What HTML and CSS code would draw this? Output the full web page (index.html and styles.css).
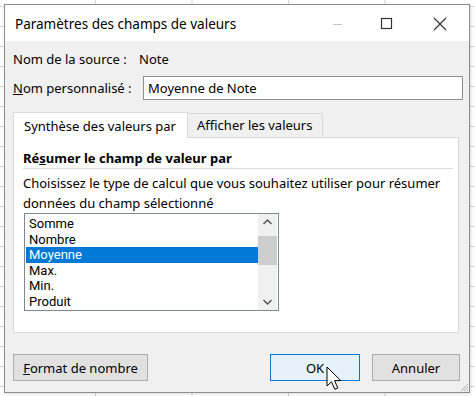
FILE: index.html
```html
<!DOCTYPE html>
<html lang="fr">
<head>
<meta charset="utf-8">
<title>Paramètres des champs de valeurs</title>
<link rel="stylesheet" href="styles.css">
</head>
<body>
<div class="screen">
  <div class="dialog">
    <div class="titlebar">
      <span class="title">Paramètres des champs de valeurs</span>
      <div class="controls">
        <svg class="ctl" width="46" height="30" viewBox="0 0 46 30"><path d="M18 15.5h9" stroke="#c4c4c4" stroke-width="1"/></svg>
        <svg class="ctl" width="46" height="30" viewBox="0 0 46 30"><rect x="17.5" y="9.5" width="10" height="10" fill="none" stroke="#333" stroke-width="1.2"/></svg>
        <svg class="ctl" width="46" height="30" viewBox="0 0 46 30"><path d="M17 9l12 12M29 9L17 21" stroke="#333" stroke-width="1.2"/></svg>
      </div>
    </div>
    <div class="body">
      <div class="row">
        <span class="label">Nom de la source :</span>
        <span class="value">Note</span>
      </div>
      <div class="row custom">
        <span class="label"><u>N</u>om personnalisé :</span>
        <div class="input">Moyenne de Note</div>
      </div>
      <div class="tabs">
        <div class="tab active">Synthèse des valeurs par</div>
        <div class="tab">Afficher les valeurs</div>
      </div>
      <div class="panel">
        <div class="group-title">Ré<u>s</u>umer le champ de valeur par</div>
        <div class="sep"></div>
        <p class="desc">Choisissez le type de calcul que vous souhaitez utiliser pour résumer données du champ sélectionné</p>
        <div class="listbox">
          <ul class="items">
            <li>Somme</li>
            <li>Nombre</li>
            <li class="selected">Moyenne</li>
            <li>Max.</li>
            <li>Min.</li>
            <li>Produit</li>
          </ul>
          <div class="scrollbar">
            <svg class="arrow" width="19" height="16" viewBox="0 0 19 16"><path d="M5.5 10l4-4 4 4" fill="none" stroke="#555" stroke-width="1.5"/></svg>
            <div class="track"><div class="thumb"></div></div>
            <svg class="arrow" width="19" height="16" viewBox="0 0 19 16"><path d="M5.5 6l4 4 4-4" fill="none" stroke="#555" stroke-width="1.5"/></svg>
          </div>
        </div>
      </div>
      <div class="buttons">
        <div class="btn format"><u>F</u>ormat de nombre</div>
        <div class="spacer"></div>
        <div class="btn ok">OK</div>
        <div class="btn cancel">Annuler</div>
      </div>
    </div>
    <svg class="grip" width="10" height="10" viewBox="0 0 10 10"><path d="M9 2L2 9M9 5L5 9M9 8L8 9" stroke="#aaa" stroke-width="1"/></svg>
  </div>
  <svg class="cursor" width="17" height="25" viewBox="0 0 17 25"><path d="M1 1v19l4.5-4.3 3.3 7.6 3-1.3-3.2-7.4h6.2z" fill="#fff" stroke="#000" stroke-width="1" stroke-linejoin="round"/></svg>
</div>
</body>
</html>
```
FILE: styles.css
```css
* { box-sizing: border-box; }
html, body { margin: 0; padding: 0; }
body {
  width: 475px;
  height: 396px;
  overflow: hidden;
  font-family: "Noto Sans", "Open Sans", sans-serif;
  font-size: 13px;
  color: #000;
  background-color: #fff;
  background-image:
    linear-gradient(to right, #d4d4d4 1px, transparent 1px),
    linear-gradient(to bottom, #d4d4d4 1px, transparent 1px);
  background-size: 96.5px 100%, 100% 20px;
  background-position: -1.5px 0, 0 6px;
}
.screen {
  position: relative;
  padding: 4px 5px 3px 4px;
  height: 396px;
}
.dialog {
  position: relative;
  width: 466px;
  height: 389px;
  border: 1px solid #8c8c8c;
  background: #f0f0f0;
  display: flex;
  flex-direction: column;
  box-shadow: 1px 1px 3px rgba(0,0,0,0.15);
}
.titlebar {
  height: 36px;
  background: #fff;
  display: flex;
  align-items: center;
  padding-left: 10px;
}
.title {
  font-size: 13.5px;
  flex: 1;
  padding-top: 2px;
}
.controls {
  display: flex;
  margin-top: 2px;
}
.ctl { display: block; }
.controls .ctl:first-child { margin-right: 3px; }
.controls .ctl:nth-child(2) { margin-right: 7px; }
.controls .ctl:last-child { margin-right: 6px; }
.body {
  flex: 1;
  padding: 8px 0 0 8px;
  display: flex;
  flex-direction: column;
}
.row {
  display: flex;
  align-items: center;
  height: 20px;
}
.label { width: 126px; }
.row.custom {
  margin-top: 7px;
  height: 24px;
}
.row.custom .label { width: 130px; }
.input {
  width: 320px;
  height: 24px;
  border: 1px solid #8f8f8f;
  background: #fff;
  padding: 0 0 0 4px;
  display: flex;
  align-items: center;
}
.tabs {
  display: flex;
  align-items: flex-end;
  margin-top: 11px;
  height: 26px;
  position: relative;
  z-index: 1;
}
.tab {
  height: 23px;
  padding: 0 8px 0 9px;
  border: 1px solid #d9d9d9;
  border-bottom: none;
  background: #f0f0f0;
  display: flex;
  align-items: center;
  margin-bottom: 1px;
}
.tab.active {
  height: 26px;
  background: #fff;
  width: 175px;
  padding-left: 10px;
  margin-bottom: -1px;
}
.tab:not(.active) {
  width: 135px;
  border-left: none;
}
.panel {
  width: 446px;
  height: 196px;
  border: 1px solid #d9d9d9;
  background: #fff;
  padding: 10px 6px 0 9px;
}
.group-title {
  font-weight: bold;
  height: 20px;
  line-height: 20px;
}
.sep {
  height: 1px;
  background: #dcdcdc;
  margin: 0 0 4px 0;
  width: 430px;
}
.desc {
  margin: 0;
  line-height: 20px;
  width: 432px;
}
.listbox {
  margin-left: 1px;
  width: 255px;
  height: 98px;
  border: 1px solid #828790;
  display: flex;
  background: #fff;
}
.items {
  list-style: none;
  margin: 0;
  padding: 2px 0 0 1px;
  width: 233px;
  font-family: Roboto, "Noto Sans", sans-serif;
  font-size: 13px;
}
.items li {
  height: 15.6px;
  line-height: 15.6px;
  padding-left: 3px;
}
.items li.selected {
  background: #0078d7;
  color: #fff;
}
.scrollbar {
  width: 19px;
  background: #f0f0f0;
  display: flex;
  flex-direction: column;
}
.arrow { display: block; }
.track {
  flex: 1;
  padding-top: 6px;
}
.thumb {
  height: 29px;
  background: #cdcdcd;
}
.buttons {
  display: flex;
  margin-top: 21px;
  height: 27px;
  padding-right: 9px;
}
.btn {
  height: 27px;
  border: 1px solid #adadad;
  background: #e1e1e1;
  display: flex;
  align-items: center;
  justify-content: center;
}
.btn.format { width: 135px; }
.spacer { flex: 1; }
.btn.ok {
  width: 90px;
  border-color: #0078d7;
  background: #e5f1fb;
  margin-right: 12px;
}
.btn.cancel { width: 88px; }
.grip {
  position: absolute;
  right: 0;
  bottom: 0;
}
.cursor {
  position: absolute;
  left: 326px;
  top: 366px;
}
```
